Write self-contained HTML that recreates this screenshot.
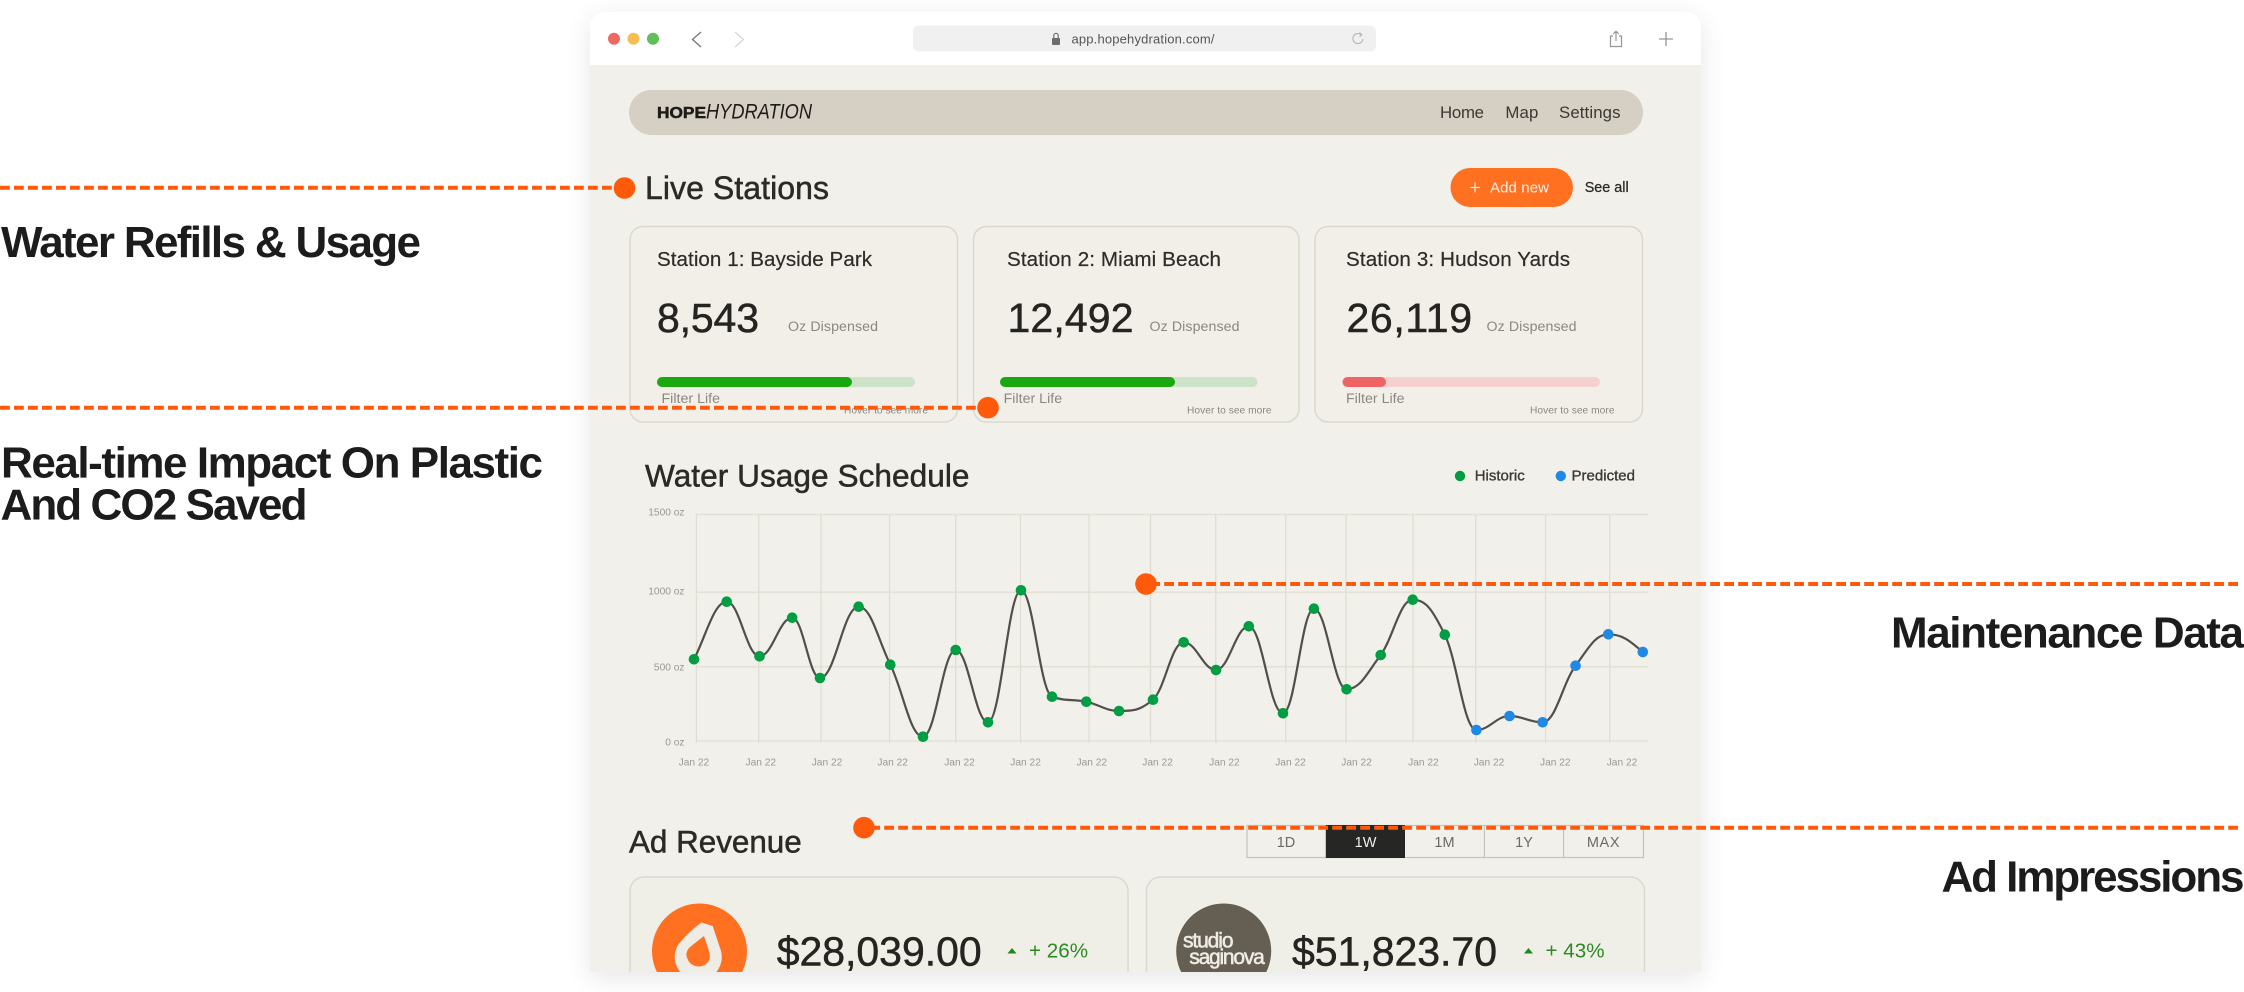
<!DOCTYPE html>
<html lang="en">
<head>
<meta charset="utf-8">
<title>Hope Hydration</title>
<style>
html,body{margin:0;padding:0;width:2244px;height:992px;background:#fff;overflow:hidden}
svg{display:block;position:absolute;left:0;top:0}
text{font-family:"Liberation Sans",sans-serif}
#win{position:absolute;left:590px;top:12px;width:1111px;height:960px;background:#f1f0ea;border-radius:14px 14px 0 0;box-shadow:0 6px 26px rgba(0,0,0,.10)}
</style>
</head>
<body>
<div id="win"></div>
<svg width="2244" height="992" viewBox="0 0 2244 992" xmlns="http://www.w3.org/2000/svg">
<defs>
<clipPath id="c"><path d="M590 26a14 14 0 0 1 14-14h1083a14 14 0 0 1 14 14v946H590z"/></clipPath>
</defs>
<g clip-path="url(#c)" style="filter:blur(.35px)">
  <!-- toolbar -->
  <rect x="590" y="12" width="1111" height="53" fill="#fff"/>
  <circle cx="614" cy="38.7" r="6" fill="#ec6a62"/>
  <circle cx="633.5" cy="38.7" r="6" fill="#f5bd52"/>
  <circle cx="653" cy="38.7" r="6" fill="#5fbf58"/>
  <path d="M701 32l-8.5 7.5 8.5 7.5" fill="none" stroke="#757575" stroke-width="1.3"/>
  <path d="M735 32l8.5 7.5-8.5 7.5" fill="none" stroke="#d6d6d6" stroke-width="1.3"/>
  <rect x="913" y="25.5" width="463" height="26" rx="6" fill="#f0f0f1"/>
  <rect x="1052" y="38" width="8" height="7" rx="1" fill="#6e6e6e"/>
  <path d="M1053.8 38v-2.5a2.2 2.2 0 0 1 4.4 0V38" fill="none" stroke="#6e6e6e" stroke-width="1.2"/>
  <text x="1071.5" y="43.5" font-size="13" fill="#555" textLength="143">app.hopehydration.com/</text>
  <path d="M1361.5 35a5 5 0 1 0 1.4 4" fill="none" stroke="#b4b4b4" stroke-width="1.1"/>
  <path d="M1359.5 32.5l2.4 2.4-2.4 2" fill="none" stroke="#b4b4b4" stroke-width="1"/>
  <path d="M1613 36h-2.5v10.5h11V36H1619M1616 41V31.5M1613.2 34l2.8-2.8 2.8 2.8" fill="none" stroke="#969696" stroke-width="1.2"/>
  <path d="M1666 32v14M1659 39h14" stroke="#969696" stroke-width="1.3"/>

  <!-- nav -->
  <rect x="629" y="90" width="1014" height="45" rx="22.5" fill="#d6cfc3"/>
  <text x="657" y="118" font-size="15.5" font-weight="bold" fill="#1c1b19" stroke="#1c1b19" stroke-width=".5" textLength="49" lengthAdjust="spacingAndGlyphs">HOPE</text>
  <text x="706" y="118.5" font-size="21" font-style="italic" fill="#1c1b19" textLength="106" lengthAdjust="spacingAndGlyphs">HYDRATION</text>
  <text x="1440" y="118" font-size="16.8" fill="#3a3833" textLength="44">Home</text>
  <text x="1505.4" y="118" font-size="16.8" fill="#3a3833" textLength="33">Map</text>
  <text x="1559" y="118" font-size="16.8" fill="#3a3833" textLength="61.5">Settings</text>

  <!-- live stations -->
  <text x="645" y="199" font-size="32" fill="#2b2a27" stroke="#2b2a27" stroke-width=".5" textLength="184">Live Stations</text>
  <rect x="1450.5" y="168" width="122.5" height="39" rx="19.5" fill="#ff7020"/>
  <path d="M1470 187.5h10M1475 182.5v10" stroke="#ffe6d6" stroke-width="1.3"/>
  <text x="1490" y="192.5" font-size="15" fill="#fff0e6" textLength="59">Add new</text>
  <text x="1584.7" y="192" font-size="14.4" fill="#2b2a27" stroke="#2b2a27" stroke-width=".25" textLength="44">See all</text>

  <!-- station cards -->
  <g fill="#f2efe9" stroke="#dcd8cd" stroke-width="1.5">
    <rect x="630" y="226.5" width="327.5" height="195.5" rx="13"/>
    <rect x="973.5" y="226.5" width="325.5" height="195.5" rx="13"/>
    <rect x="1315" y="226.5" width="327.5" height="195.5" rx="13"/>
  </g>
  <g font-size="20.6" fill="#2d2c29" stroke="#2d2c29" stroke-width=".2">
    <text x="657" y="266" textLength="215">Station 1: Bayside Park</text>
    <text x="1007" y="266" textLength="214">Station 2: Miami Beach</text>
    <text x="1346" y="266" textLength="224">Station 3: Hudson Yards</text>
  </g>
  <g font-size="41" fill="#252420" stroke="#252420" stroke-width=".5">
    <text x="657" y="332" textLength="102">8,543</text>
    <text x="1007.5" y="332" textLength="126">12,492</text>
    <text x="1346.5" y="332" textLength="125.5">26,119</text>
  </g>
  <g font-size="14.2" fill="#8a8880">
    <text x="788" y="331" textLength="90">Oz Dispensed</text>
    <text x="1149.5" y="331" textLength="90">Oz Dispensed</text>
    <text x="1486.5" y="331" textLength="90">Oz Dispensed</text>
  </g>
  <rect x="657" y="377" width="258" height="10" rx="5" fill="#cde3c9"/>
  <rect x="657" y="377" width="195" height="10" rx="5" fill="#1aa80f"/>
  <rect x="1000" y="377" width="257.5" height="10" rx="5" fill="#cde3c9"/>
  <rect x="1000" y="377" width="175" height="10" rx="5" fill="#1aa80f"/>
  <rect x="1342.5" y="377" width="257.5" height="10" rx="5" fill="#f6d0d0"/>
  <rect x="1342.5" y="377" width="43.5" height="10" rx="5" fill="#ee6464"/>
  <g font-size="14.2" fill="#8a8880">
    <text x="661.5" y="403" textLength="58.5">Filter Life</text>
    <text x="1003.6" y="403" textLength="58.5">Filter Life</text>
    <text x="1346" y="403" textLength="58.5">Filter Life</text>
  </g>
  <g font-size="10.2" fill="#8a8880">
    <text x="844" y="413.5" textLength="84">Hover to see more</text>
    <text x="1187" y="413.5" textLength="84.5">Hover to see more</text>
    <text x="1530" y="413.5" textLength="84.5">Hover to see more</text>
  </g>

  <!-- chart header -->
  <text x="645" y="486.7" font-size="31.6" fill="#2b2a27" stroke="#2b2a27" stroke-width=".5" textLength="324.5">Water Usage Schedule</text>
  <circle cx="1460" cy="476" r="5.2" fill="#019d42"/>
  <text x="1474.7" y="480.5" font-size="15" fill="#3a3a38" stroke="#3a3a38" stroke-width=".35" textLength="50">Historic</text>
  <circle cx="1560.8" cy="476" r="5.2" fill="#2089e6"/>
  <text x="1571.5" y="480.5" font-size="15" fill="#3a3a38" stroke="#3a3a38" stroke-width=".35" textLength="63.5">Predicted</text>

  <!-- grid -->
  <g stroke="#e4e1d7" stroke-width="1.6">
    <path d="M696 514.5H1648M696 592.3H1648M696 666.7H1648M696 741H1648" fill="none"/>
  </g>
  <g stroke="#e0ddd3" stroke-width="1.3" fill="none">
    <path d="M696.4 514V743M758.8 514V743M821 514V743M889.6 514V743M955.7 514V743M1020.5 514V743M1089 514V743M1150.5 514V743M1215.8 514V743M1285.7 514V743M1346 514V743M1413 514V743M1475.7 514V743M1545.6 514V743M1609.7 514V743"/>
  </g>
  <g font-size="10.2" fill="#9a9890" text-anchor="end">
    <text x="684.5" y="515.5">1500 oz</text>
    <text x="684.5" y="594.5">1000 oz</text>
    <text x="684.5" y="670.5">500 oz</text>
    <text x="684.5" y="745.5">0 oz</text>
  </g>
  <g font-size="10.2" fill="#9a9890" text-anchor="middle">
    <text x="693.9" y="765.5">Jan 22</text>
    <text x="760.8" y="765.5">Jan 22</text>
    <text x="827" y="765.5">Jan 22</text>
    <text x="892.7" y="765.5">Jan 22</text>
    <text x="959.5" y="765.5">Jan 22</text>
    <text x="1025.6" y="765.5">Jan 22</text>
    <text x="1091.8" y="765.5">Jan 22</text>
    <text x="1157.6" y="765.5">Jan 22</text>
    <text x="1224.4" y="765.5">Jan 22</text>
    <text x="1290.5" y="765.5">Jan 22</text>
    <text x="1356.6" y="765.5">Jan 22</text>
    <text x="1423.4" y="765.5">Jan 22</text>
    <text x="1489" y="765.5">Jan 22</text>
    <text x="1555.3" y="765.5">Jan 22</text>
    <text x="1622" y="765.5">Jan 22</text>
  </g>
  <path fill="none" stroke="#524f4a" stroke-width="2.2" d="M694 659.3C706 636 714 601.7 726.7 601.7C739.8 601.7 746.4 656.3 759.5 656.3C772.6 656.3 779.1 617.7 792.2 617.7C803.3 617.7 808.9 678 820 678C835.4 678 843.2 606.7 858.6 606.7C871.3 606.7 877.6 638.7 890.3 664.7C903.3 690.7 910 736.7 923 736.7C936 736.7 942.7 650 955.7 650C968.7 650 975 722.3 988 722.3C1001 722.3 1008 590.3 1021 590.3C1033.4 590.3 1039.6 691.7 1052 696.7C1065.7 701.7 1072.6 698.8 1086.3 701.7C1099.3 704.6 1106 711 1119 711C1132.6 711 1139.4 711 1153 699.7C1165.3 688.4 1171.4 642.3 1183.7 642.3C1196.7 642.3 1203 670 1216 670C1229 670 1235.8 626.3 1248.8 626.3C1262.5 626.3 1269.3 713.3 1283 713.3C1295.4 713.3 1301.5 608.7 1313.9 608.7C1326.9 608.7 1333.6 689.3 1346.6 689.3C1360.2 689.3 1367.1 672.9 1380.7 655C1393.5 637.1 1399.9 599.7 1412.7 599.7C1425.5 599.7 1432 608.7 1444.8 634.7C1457.4 660.7 1463.8 730 1476.4 730C1489.6 730 1496.3 716 1509.5 716C1522.7 716 1529.4 722.3 1542.6 722.3C1555.8 722.3 1562.4 683.3 1575.6 665.7C1588.6 648.1 1595.3 634.3 1608.3 634.3C1622 634.3 1629 640 1642.8 652"/>
  <g fill="#019d42">
    <circle cx="694" cy="659.3" r="5.3"/><circle cx="726.7" cy="601.7" r="5.3"/><circle cx="759.5" cy="656.3" r="5.3"/><circle cx="792.2" cy="617.7" r="5.3"/><circle cx="820" cy="678" r="5.3"/><circle cx="858.6" cy="606.7" r="5.3"/><circle cx="890.3" cy="664.7" r="5.3"/><circle cx="923" cy="736.7" r="5.3"/><circle cx="955.7" cy="650" r="5.3"/><circle cx="988" cy="722.3" r="5.3"/><circle cx="1021" cy="590.3" r="5.3"/><circle cx="1052" cy="696.7" r="5.3"/><circle cx="1086.3" cy="701.7" r="5.3"/><circle cx="1119" cy="711" r="5.3"/><circle cx="1153" cy="699.7" r="5.3"/><circle cx="1183.7" cy="642.3" r="5.3"/><circle cx="1216" cy="670" r="5.3"/><circle cx="1248.8" cy="626.3" r="5.3"/><circle cx="1283" cy="713.3" r="5.3"/><circle cx="1313.9" cy="608.7" r="5.3"/><circle cx="1346.6" cy="689.3" r="5.3"/><circle cx="1380.7" cy="655" r="5.3"/><circle cx="1412.7" cy="599.7" r="5.3"/><circle cx="1444.8" cy="634.7" r="5.3"/>
  </g>
  <g fill="#2089e6">
    <circle cx="1476.4" cy="730" r="5.3"/><circle cx="1509.5" cy="716" r="5.3"/><circle cx="1542.6" cy="722.3" r="5.3"/><circle cx="1575.6" cy="665.7" r="5.3"/><circle cx="1608.3" cy="634.3" r="5.3"/><circle cx="1642.8" cy="652" r="5.3"/>
  </g>

  <!-- ad revenue -->
  <text x="629" y="852.3" font-size="31.4" fill="#2b2a27" stroke="#2b2a27" stroke-width=".5" textLength="172.7">Ad Revenue</text>
  <rect x="1247" y="825.5" width="396.5" height="32" fill="none" stroke="#c6c3bb" stroke-width="1.2"/>
  <path d="M1484.4 825.5v32M1563.6 825.5v32" stroke="#c6c3bb" stroke-width="1.2"/>
  <rect x="1325.8" y="825" width="79.2" height="33" fill="#262624"/>
  <g font-size="14.5" fill="#6b6a65" text-anchor="middle">
    <text x="1286" y="847">1D</text>
    <text x="1365.5" y="847" fill="#f1f0ea">1W</text>
    <text x="1444.5" y="847">1M</text>
    <text x="1524" y="847">1Y</text>
    <text x="1603.5" y="847" letter-spacing=".6">MAX</text>
  </g>
  <g fill="#efeee7" stroke="#dbd9cf" stroke-width="1.5">
    <rect x="630" y="877" width="498" height="130" rx="14"/>
    <rect x="1146.5" y="877" width="498" height="130" rx="14"/>
  </g>
  <circle cx="699.5" cy="951" r="47.5" fill="#ff7020"/>
  <path d="M701.5 922.5L712.7 926L720 948A23.5 23.5 0 1 1 678 945Q688 932 701.5 922.5Z" fill="#efece5"/>
  <path d="M704 936L709 951Q711 958 708 962A12 12 0 0 1 688 960Q684 953 690 947Z" fill="#ff7020"/>
  <text x="776.7" y="965.7" font-size="41" fill="#252420" stroke="#252420" stroke-width=".5" textLength="205">$28,039.00</text>
  <path d="M1007.5 953.5h9l-4.5-5.5z" fill="#1f8a1a"/>
  <text x="1029" y="957.7" font-size="20.6" fill="#2c8a22" textLength="59">+ 26%</text>

  <circle cx="1223.7" cy="951" r="47.5" fill="#655e53"/>
  <text x="1183" y="947.7" font-size="21" fill="#efece6" stroke="#efece6" stroke-width=".55" textLength="50.5">studio</text>
  <text x="1189.3" y="964" font-size="21" fill="#efece6" stroke="#efece6" stroke-width=".55" textLength="75.5">saginova</text>
  <text x="1292" y="965.7" font-size="41" fill="#252420" stroke="#252420" stroke-width=".5" textLength="205">$51,823.70</text>
  <path d="M1524 953.5h9l-4.5-5.5z" fill="#1f8a1a"/>
  <text x="1545.5" y="957.7" font-size="20.6" fill="#2c8a22" textLength="59">+ 43%</text>
</g>

<!-- annotations -->
<g stroke="#ff5a0c" stroke-width="4" stroke-dasharray="9.8 4.2" fill="none">
  <path d="M0 187.7H615"/>
  <path d="M0 407.7H980"/>
  <path d="M2238 584H1150"/>
  <path d="M2238 827.7H868"/>
</g>
<g fill="#ff5a0c">
  <circle cx="624.5" cy="188" r="10.8"/>
  <circle cx="988" cy="407.7" r="10.8"/>
  <circle cx="1146" cy="584" r="10.8"/>
  <circle cx="864" cy="827.7" r="10.8"/>
</g>
<g font-size="44" font-weight="bold" fill="#1c1c1c">
  <text x="1" y="257" textLength="420" lengthAdjust="spacing">Water Refills &amp; Usage</text>
  <text x="1" y="477.3" textLength="542" lengthAdjust="spacing">Real-time Impact On Plastic</text>
  <text x="0.5" y="519.3" textLength="307" lengthAdjust="spacing">And CO2 Saved</text>
  <text x="1891" y="647.7" textLength="353" lengthAdjust="spacing">Maintenance Data</text>
  <text x="1941.5" y="891.7" textLength="303" lengthAdjust="spacing">Ad Impressions</text>
</g>
</svg>
</body>
</html>
